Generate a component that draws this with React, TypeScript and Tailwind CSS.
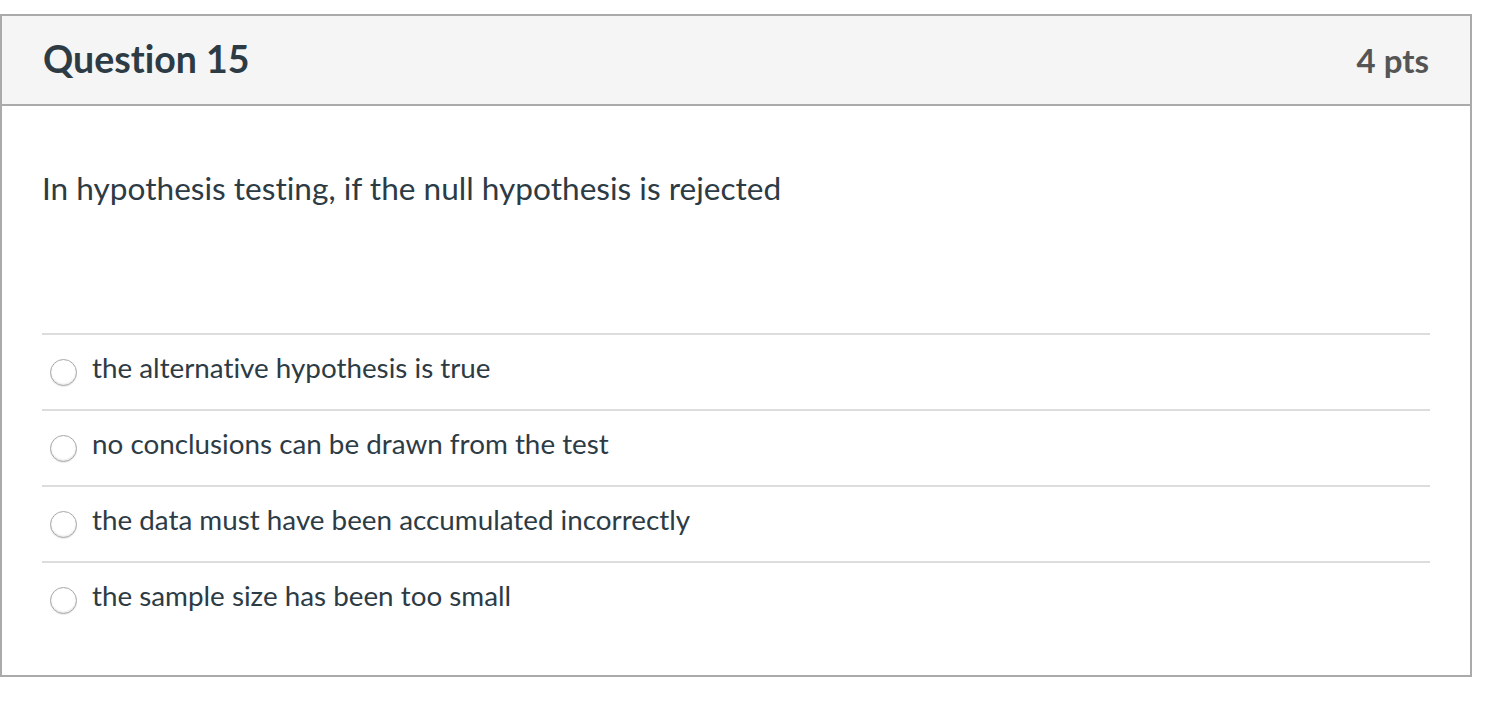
import React from "react";

const answers = [
  "the alternative hypothesis is true",
  "no conclusions can be drawn from the test",
  "the data must have been accumulated incorrectly",
  "the sample size has been too small",
];

export default function App() {
  return (
    <div
      className="bg-white pt-[14px] w-[1486px] h-[718px] [font-variant-ligatures:none]"
      style={{ fontFamily: "Lato, 'Open Sans', sans-serif" }}
    >
      <div className="w-[1472px] border-2 border-[#aaaaaa]">
        <div className="h-[90px] bg-[#f5f5f5] border-b-2 border-[#aaaaaa] flex items-center justify-between pl-[41px] pr-[41px]">
          <div className="text-[37.5px] font-bold text-[#2d3b45] leading-none pb-[3px]">Question 15</div>
          <div className="text-[33px] font-bold text-[#555555] leading-none">4 pts</div>
        </div>
        <div className="px-[40px] pb-[38px]">
          <div className="h-[227px] pt-[61px]">
            <p className="text-[31.6px] leading-[42px] text-[#2d3b45]">In hypothesis testing, if the null hypothesis is rejected</p>
          </div>
          {answers.map((a) => (
            <div key={a} className="border-t-2 border-[#dddddd] h-[76px] flex items-center">
              <span className="ml-[8px] w-[27px] h-[27px] rounded-full border border-[#a8a8a8] bg-white shadow-[inset_0_-1px_2px_rgba(0,0,0,0.12),0_1px_1px_rgba(0,0,0,0.08)] shrink-0" />
              <span className="ml-[15px] pb-[9px] text-[27.8px] text-[#2d3b45] leading-none">{a}</span>
            </div>
          ))}
        </div>
      </div>
    </div>
  );
}
